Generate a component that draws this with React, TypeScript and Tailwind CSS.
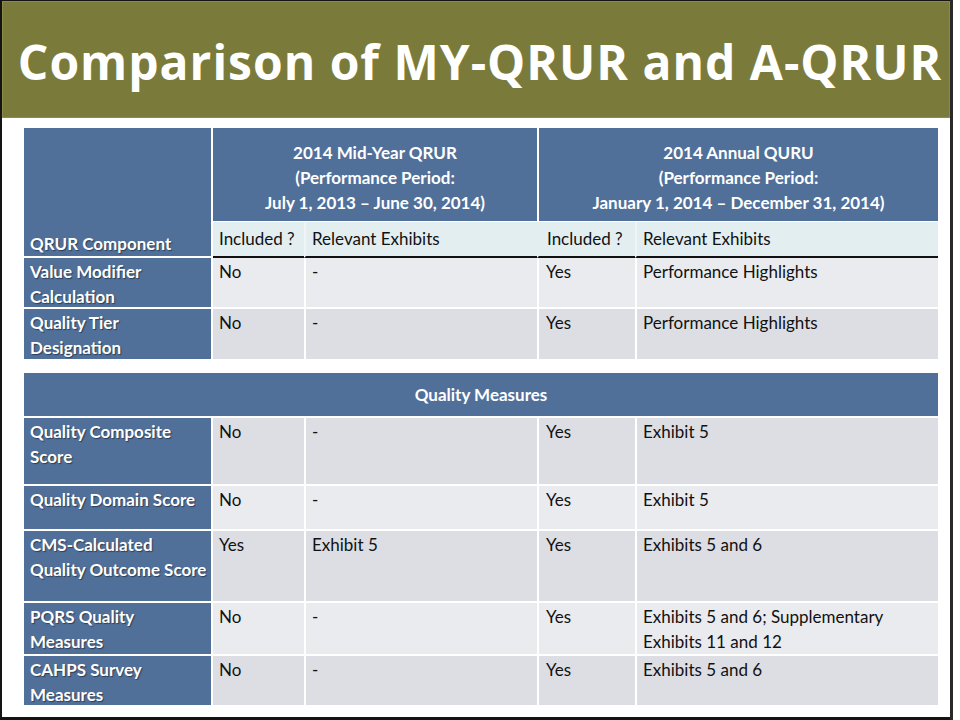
const blue = 'bg-[#50709a]';

const rows1 = [
  { label: ['Value Modifier', 'Calculation'], a: 'No', b: '-', c: 'Yes', d: ['Performance Highlights'], h: 'h-[51px] border-b-2', bg: 'bg-[#eaebef]' },
  { label: ['Quality Tier', 'Designation'], a: 'No', b: '-', c: 'Yes', d: ['Performance Highlights'], h: 'h-[50px]', bg: 'bg-[#dcdee4]' },
];

const rows2 = [
  { label: ['Quality Composite', 'Score'], a: 'No', b: '-', c: 'Yes', d: ['Exhibit 5'], h: 'h-[68px] border-b-2', bg: 'bg-[#dcdee4]' },
  { label: ['Quality Domain Score'], a: 'No', b: '-', c: 'Yes', d: ['Exhibit 5'], h: 'h-[45px] border-b-2', bg: 'bg-[#eaebef]' },
  { label: ['CMS-Calculated', 'Quality Outcome Score'], a: 'Yes', b: 'Exhibit 5', c: 'Yes', d: ['Exhibits 5 and 6'], h: 'h-[72px] border-b-2', bg: 'bg-[#dcdee4]' },
  { label: ['PQRS Quality', 'Measures'], a: 'No', b: '-', c: 'Yes', d: ['Exhibits 5 and 6; Supplementary', 'Exhibits 11 and 12'], h: 'h-[53px] border-b-2', bg: 'bg-[#eaebef]' },
  { label: ['CAHPS Survey', 'Measures'], a: 'No', b: '-', c: 'Yes', d: ['Exhibits 5 and 6'], h: 'h-[49px]', bg: 'bg-[#dcdee4]' },
];

type Row = (typeof rows1)[number];

function BodyRow({ row }: { row: Row }) {
  const cell = `${row.h} ${row.bg} border-white pl-[6px] pt-[1px] text-[#111]`;
  return (
    <>
      <div className={`${row.h} ${blue} border-white pl-[6px] pt-[1px] font-bold text-white [text-shadow:1px_1px_1px_rgba(0,0,0,0.45)]`}>
        {row.label.map((l) => (
          <div key={l}>{l}</div>
        ))}
      </div>
      <div className={cell}>{row.a}</div>
      <div className={cell}>{row.b}</div>
      <div className={`${cell} pl-[7px]`}>{row.c}</div>
      <div className={cell}>
        {row.d.map((l) => (
          <div key={l}>{l}</div>
        ))}
      </div>
    </>
  );
}

export default function App() {
  return (
    <div className="flex h-[720px] w-[960px] bg-white font-['Lato',sans-serif] text-[17px] leading-[25px]">
      <div className="flex w-[950px] flex-col border-l-2 border-t border-b-[3px] border-[#141414]">
        <div className="flex h-[117px] items-center justify-center border border-[#8b8c47] bg-[#7a7b3b] pt-[4px]">
          <h1 className="pl-[8px] font-['Open_Sans',sans-serif] text-[48px] font-bold tracking-[1px] text-white">Comparison of MY-QRUR and A-QRUR</h1>
        </div>

        <div className="mt-[10px] ml-[22px] grid w-[914px] grid-cols-[187px_91px_231px_96px_301px] gap-x-[2px]">
          <div className={`row-span-2 flex h-[130px] items-end border-b-2 border-white ${blue} pl-[6px] font-bold text-white [text-shadow:1px_1px_1px_rgba(0,0,0,0.45)]`}>
            QRUR Component
          </div>
          <div className={`col-span-2 h-[94px] border-b border-white ${blue} pt-[12px] text-center font-bold text-white`}>
            <div>2014 Mid-Year QRUR</div>
            <div>(Performance Period:</div>
            <div>July 1, 2013 – June 30, 2014)</div>
          </div>
          <div className={`col-span-2 h-[94px] border-b border-white ${blue} pt-[12px] text-center font-bold text-white`}>
            <div>2014 Annual QURU</div>
            <div>(Performance Period:</div>
            <div>January 1, 2014 – December 31, 2014)</div>
          </div>
          <div className="h-[36px] border-b-2 border-[#111] bg-[#e3eef1] pl-[6px] pt-[4px] text-[#111]">Included ?</div>
          <div className="-ml-[2px] h-[36px] border-b-2 border-l-2 border-[#111] border-l-[#f0f4f6] bg-[#e3eef1] pl-[6px] pt-[4px] text-[#111]">Relevant Exhibits</div>
          <div className="-ml-[2px] h-[36px] border-b-2 border-l-2 border-[#111] border-l-[#e3eef1] bg-[#e3eef1] pl-[8px] pt-[4px] text-[#111]">Included ?</div>
          <div className="-ml-[2px] h-[36px] border-b-2 border-l-2 border-[#111] border-l-[#f0f4f6] bg-[#e3eef1] pl-[6px] pt-[4px] text-[#111]">Relevant Exhibits</div>
          {rows1.map((r) => (
            <BodyRow key={r.label[0]} row={r} />
          ))}
        </div>

        <div className="mt-[14px] ml-[22px] grid w-[914px] grid-cols-[187px_91px_231px_96px_301px] gap-x-[2px]">
          <div className={`col-span-5 flex h-[45px] items-center justify-center border-b-2 border-white ${blue} pb-[1px] font-bold text-white`}>
            Quality Measures
          </div>
          {rows2.map((r) => (
            <BodyRow key={r.label[0]} row={r} />
          ))}
        </div>
      </div>
      <div className="w-[3px] bg-[#2a2a2a]" />
    </div>
  );
}
